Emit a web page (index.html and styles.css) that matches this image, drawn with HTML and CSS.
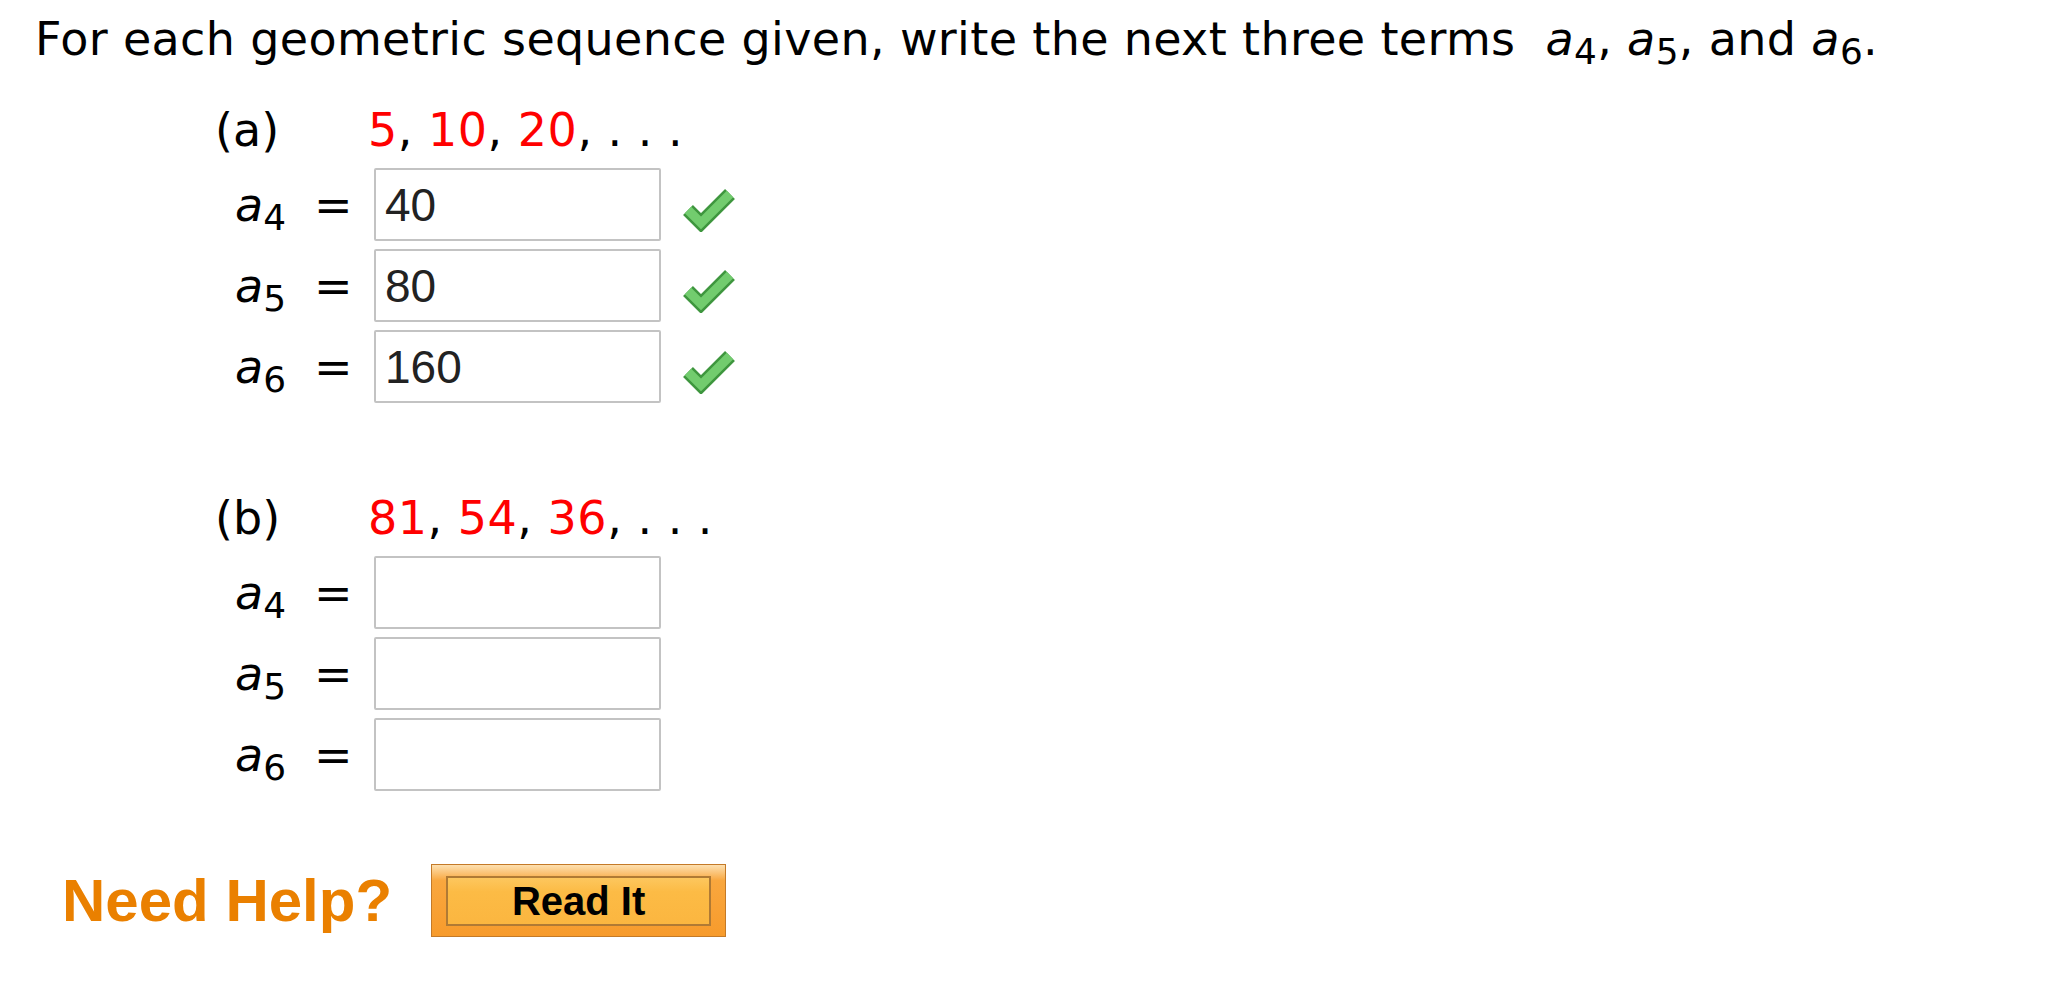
FILE: index.html
```html
<!DOCTYPE html>
<html>
  <head>
    <meta charset="utf-8" />
    <title>Geometric sequences</title>
    <link rel="stylesheet" href="styles.css">
  </head>
  <body>
    <div class="page">
      <p class="prompt">
        For each geometric sequence given, write the next three terms&nbsp;
        <span class="var">a<span class="sub">4</span></span>,
        <span class="var">a<span class="sub">5</span></span>, and
        <span class="var">a<span class="sub">6</span></span>.
      </p>

      <div class="part part-a">
        <div class="part-head">
          <span class="part-label">(a)</span><span class="seq"><span class="given">5</span>, <span class="given">10</span>, <span class="given">20</span>, . . .</span>
        </div>
        <div class="answers">
          <div class="answer">
            <span class="term"><span class="var">a<span class="sub">4</span></span></span>
            <span class="eq">=</span>
            <input class="blank" type="text" value="40" />
            <svg class="check" viewBox="0 0 54 46"><path class="check-edge" d="M6 24 L19 37 L48 8" /><path class="check-fill" d="M6 24 L19 37 L48 8" /></svg>
          </div>
          <div class="answer">
            <span class="term"><span class="var">a<span class="sub">5</span></span></span>
            <span class="eq">=</span>
            <input class="blank" type="text" value="80" />
            <svg class="check" viewBox="0 0 54 46"><path class="check-edge" d="M6 24 L19 37 L48 8" /><path class="check-fill" d="M6 24 L19 37 L48 8" /></svg>
          </div>
          <div class="answer">
            <span class="term"><span class="var">a<span class="sub">6</span></span></span>
            <span class="eq">=</span>
            <input class="blank" type="text" value="160" />
            <svg class="check" viewBox="0 0 54 46"><path class="check-edge" d="M6 24 L19 37 L48 8" /><path class="check-fill" d="M6 24 L19 37 L48 8" /></svg>
          </div>
        </div>
      </div>

      <div class="part part-b">
        <div class="part-head">
          <span class="part-label">(b)</span><span class="seq"><span class="given">81</span>, <span class="given">54</span>, <span class="given">36</span>, . . .</span>
        </div>
        <div class="answers">
          <div class="answer">
            <span class="term"><span class="var">a<span class="sub">4</span></span></span>
            <span class="eq">=</span>
            <input class="blank" type="text" value="" />
          </div>
          <div class="answer">
            <span class="term"><span class="var">a<span class="sub">5</span></span></span>
            <span class="eq">=</span>
            <input class="blank" type="text" value="" />
          </div>
          <div class="answer">
            <span class="term"><span class="var">a<span class="sub">6</span></span></span>
            <span class="eq">=</span>
            <input class="blank" type="text" value="" />
          </div>
        </div>
      </div>

      <div class="help">
        <span class="help-title">Need Help?</span>
        <div class="read-it">
          <div class="read-it-inner">Read It</div>
        </div>
      </div>
    </div>
  </body>
</html>
```

FILE: styles.css
```css
body {
  margin: 0;
  background: #fff;
  color: #000;
  font-family: "DejaVu Sans", Verdana, sans-serif;
}
.page {
  padding-left: 35px;
}
.prompt {
  margin: 0;
  padding-top: 11px;
  font-size: 46px;
  line-height: 56px;
  letter-spacing: 0.35px;
  white-space: nowrap;
}
.var {
  font-style: italic;
}
.sub {
  font-style: normal;
  font-size: 0.78em;
  line-height: 0;
  vertical-align: -0.24em;
}
.part {
  margin-left: 180px;
  font-size: 46px;
}
.part-a {
  margin-top: 39px;
}
.part-b {
  margin-top: 91px;
}
.part-head {
  line-height: 48px;
  margin-bottom: 14px;
  white-space: nowrap;
}
.part-label {
  display: inline-block;
  width: 153px;
}
.seq {
  letter-spacing: 0.5px;
}
.given {
  color: #ff0000;
}
.answers {
  display: flex;
  flex-direction: column;
  gap: 8px;
}
.answer {
  display: flex;
  align-items: center;
  height: 73px;
}
.term {
  box-sizing: border-box;
  width: 99px;
  padding-left: 20px;
}
.eq {
  width: 60px;
}
.blank {
  box-sizing: border-box;
  width: 287px;
  height: 73px;
  margin: 0;
  padding: 0 9px;
  border: 2px solid #c3c3c3;
  border-radius: 2px;
  font-family: "Liberation Sans", Arial, sans-serif;
  font-size: 46px;
  color: #222;
  background: #fff;
}
.check {
  width: 54px;
  height: 46px;
  margin-left: 21px;
  margin-top: 8px;
}
.check-edge {
  fill: none;
  stroke: #3e963e;
  stroke-width: 14;
}
.check-fill {
  fill: none;
  stroke: #72cc6e;
  stroke-width: 9;
}
.help {
  display: flex;
  align-items: center;
  margin-top: 73px;
  padding-left: 27px;
}
.help-title {
  font-family: "Liberation Sans", Arial, sans-serif;
  font-weight: bold;
  font-size: 60px;
  line-height: 60px;
  color: #ea8000;
}
.read-it {
  box-sizing: border-box;
  width: 295px;
  height: 73px;
  margin-left: 39px;
  padding: 11px 14px 10px;
  border: 1px solid #c47a28;
  background: linear-gradient(#fde0b0 0, #f9a73e 22%, #f79b2c 100%);
}
.read-it-inner {
  box-sizing: border-box;
  height: 100%;
  display: flex;
  align-items: center;
  justify-content: center;
  border: 2px solid #b07a34;
  background: linear-gradient(#fdc75e 0, #fcbb45 30%, #fbb640 100%);
  font-family: "Liberation Sans", Arial, sans-serif;
  font-weight: bold;
  font-size: 40px;
  color: #000;
}
```
